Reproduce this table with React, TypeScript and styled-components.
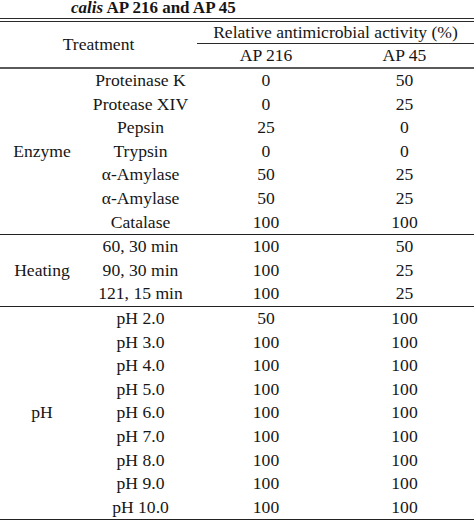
import React from "react";
import styled, { createGlobalStyle } from "styled-components";

const GlobalStyle = createGlobalStyle`
  html, body {
    margin: 0;
    padding: 0;
    background: #ffffff;
  }
  body {
    font-family: "Liberation Serif", "Times New Roman", serif;
    color: #161616;
  }
`;

type Row = { label: string; ap216: string; ap45: string };
type Group = { name: string; rows: Row[] };

const groups: Group[] = [
  {
    name: "Enzyme",
    rows: [
      { label: "Proteinase K", ap216: "0", ap45: "50" },
      { label: "Protease XIV", ap216: "0", ap45: "25" },
      { label: "Pepsin", ap216: "25", ap45: "0" },
      { label: "Trypsin", ap216: "0", ap45: "0" },
      { label: "\u03b1-Amylase", ap216: "50", ap45: "25" },
      { label: "\u03b1-Amylase", ap216: "50", ap45: "25" },
      { label: "Catalase", ap216: "100", ap45: "100" },
    ],
  },
  {
    name: "Heating",
    rows: [
      { label: "60, 30 min", ap216: "100", ap45: "50" },
      { label: "90, 30 min", ap216: "100", ap45: "25" },
      { label: "121, 15 min", ap216: "100", ap45: "25" },
    ],
  },
  {
    name: "pH",
    rows: [
      { label: "pH 2.0", ap216: "50", ap45: "100" },
      { label: "pH 3.0", ap216: "100", ap45: "100" },
      { label: "pH 4.0", ap216: "100", ap45: "100" },
      { label: "pH 5.0", ap216: "100", ap45: "100" },
      { label: "pH 6.0", ap216: "100", ap45: "100" },
      { label: "pH 7.0", ap216: "100", ap45: "100" },
      { label: "pH 8.0", ap216: "100", ap45: "100" },
      { label: "pH 9.0", ap216: "100", ap45: "100" },
      { label: "pH 10.0", ap216: "100", ap45: "100" },
    ],
  },
];

const Page = styled.div`
  width: 474px;
  overflow: hidden;
`;

// only the tail of the table caption is visible at the top of the crop
const Caption = styled.div`
  height: 18px;
  overflow: hidden;
  padding-left: 71px;
`;

const CaptionText = styled.div`
  margin-top: -4px;
  font-size: 17px;
  line-height: 24px;
  font-weight: bold;
  white-space: nowrap;

  em {
    font-style: italic;
  }
`;

const Table = styled.table`
  width: 474px;
  border-collapse: collapse;
  table-layout: fixed;
  font-size: 17.6px;
  border-top: 4px double #2a2a2a;
`;

const HeadCell = styled.th<{ $underline?: boolean; $tall?: boolean }>`
  font-weight: normal;
  text-align: center;
  padding: 0;
  line-height: ${(p) => (p.$tall ? "21px" : "23px")};
  white-space: nowrap;
  border-bottom: ${(p) => (p.$underline ? "1px solid #2a2a2a" : "none")};
`;

const HeadRow = styled.tr<{ $last?: boolean }>`
  border-bottom: ${(p) => (p.$last ? "2px solid #5a5a5a" : "none")};
`;

const BodyRow = styled.tr<{ $groupEnd?: boolean }>`
  border-bottom: ${(p) => (p.$groupEnd ? "1.5px solid #222" : "none")};
`;

const Cell = styled.td`
  text-align: center;
  padding: 0;
  line-height: 23.6px;
  white-space: nowrap;
`;

const GroupCell = styled(Cell)`
  vertical-align: middle;
`;

export default function App() {
  return (
    <Page>
      <GlobalStyle />
      <Caption>
        <CaptionText>
          <em>calis</em> AP 216 and AP 45
        </CaptionText>
      </Caption>
      <Table>
        <colgroup>
          <col style={{ width: 84 }} />
          <col style={{ width: 113 }} />
          <col style={{ width: 138 }} />
          <col style={{ width: 139 }} />
        </colgroup>
        <thead>
          <HeadRow>
            <HeadCell colSpan={2} rowSpan={2}>
              Treatment
            </HeadCell>
            <HeadCell colSpan={2} $underline $tall>
              Relative antimicrobial activity (%)
            </HeadCell>
          </HeadRow>
          <HeadRow $last>
            <HeadCell>AP 216</HeadCell>
            <HeadCell>AP 45</HeadCell>
          </HeadRow>
        </thead>
        <tbody>
          {groups.map((group) =>
            group.rows.map((row, i) => (
              <BodyRow
                key={group.name + i}
                $groupEnd={i === group.rows.length - 1}
              >
                {i === 0 && (
                  <GroupCell rowSpan={group.rows.length}>{group.name}</GroupCell>
                )}
                <Cell>{row.label}</Cell>
                <Cell>{row.ap216}</Cell>
                <Cell>{row.ap45}</Cell>
              </BodyRow>
            ))
          )}
        </tbody>
      </Table>
    </Page>
  );
}
